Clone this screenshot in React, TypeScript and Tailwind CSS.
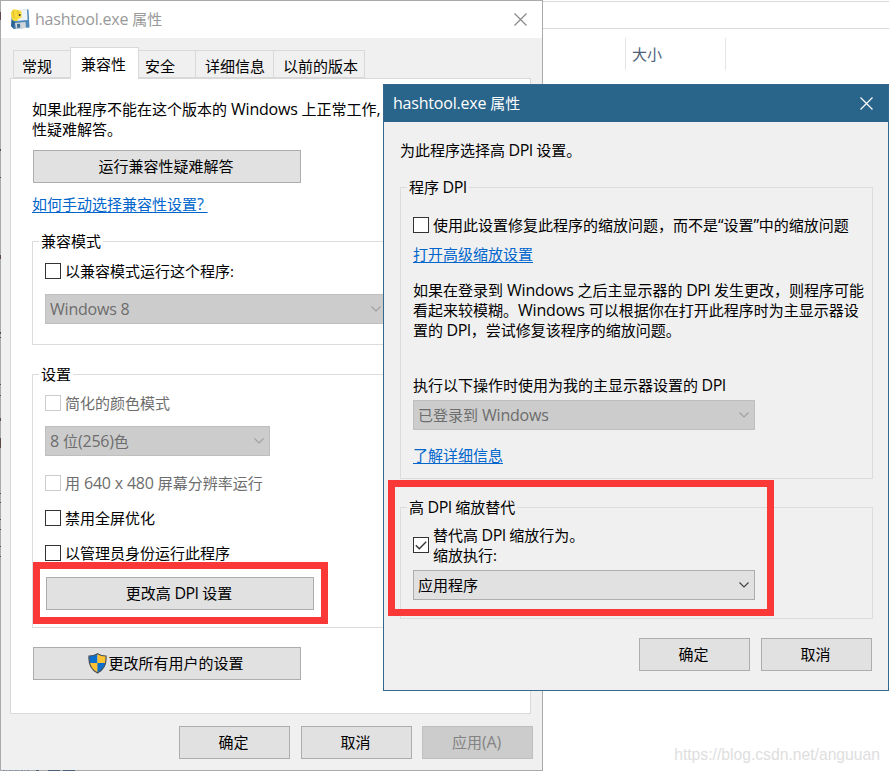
import type { ReactNode } from "react";
import clsx from "clsx";

/** Latin runs are set a touch larger than the CJK text around them. */
function En({ children }: { children: ReactNode }) {
  return <span className="text-base leading-none tracking-[-0.2px] whitespace-pre-wrap">{children}</span>;
}

function Dpi({ before = " ", after = " " }: { before?: string; after?: string }) {
  return (
    <span className="text-base leading-none tracking-[-0.55px] whitespace-pre-wrap">{`${before}DPI${after}`}</span>
  );
}

function Button({ children, className, disabled }: { children: ReactNode; className?: string; disabled?: boolean }) {
  return (
    <button
      className={clsx(
        "flex h-[33px] shrink-0 items-center justify-center border pr-0.5 pb-0.5 leading-5",
        disabled ? "border-[#bfbfbf] bg-[#cccccc] text-[#838383]" : "border-[#adadad] bg-[#e1e1e1]",
        className
      )}
    >
      {children}
    </button>
  );
}

function Select({ children, className, disabled }: { children: ReactNode; className?: string; disabled?: boolean }) {
  return (
    <div
      className={clsx(
        "flex h-[30px] items-center justify-between border pr-[5px] pl-1",
        disabled ? "border-[#bfbfbf] bg-[#cccccc] text-[#6d6d6d]" : "border-[#adadad] bg-[#e1e1e1]",
        className
      )}
    >
      <span>{children}</span>
      <svg width="10" height="6" viewBox="0 0 10 6" fill="none" aria-hidden="true">
        <path d="M0.5 0.5L5 5L9.5 0.5" stroke={disabled ? "#a0a0a0" : "#404040"} strokeWidth="1.1" />
      </svg>
    </div>
  );
}

function Checkbox({ children, className, checked, disabled }: {
  children: ReactNode;
  className?: string;
  checked?: boolean;
  disabled?: boolean;
}) {
  return (
    <label className={clsx("flex items-center gap-1 whitespace-nowrap", disabled && "text-[#6d6d6d]", className)}>
      <span
        className={clsx(
          "flex h-4 w-4 shrink-0 items-center justify-center border bg-white",
          disabled ? "border-[#cccccc]" : "border-[#333333]"
        )}
      >
        {checked && (
          <svg width="12" height="9" viewBox="0 0 12 9" fill="none" aria-hidden="true">
            <path d="M0.8 4.2L4.3 7.7L11.2 0.8" stroke="#333" strokeWidth="1.4" />
          </svg>
        )}
      </span>
      <span>{children}</span>
    </label>
  );
}

function Group({ title, className, children }: { title: ReactNode; className?: string; children: ReactNode }) {
  return (
    <fieldset className={clsx("border border-[#dcdcdc]", className)}>
      <legend className="ml-1.5 h-5 px-0.5 whitespace-nowrap">{title}</legend>
      <div className="flow-root pl-3">{children}</div>
    </fieldset>
  );
}

function Link({ children, className }: { children: ReactNode; className?: string }) {
  return (
    <a className={clsx("block w-fit text-[#0066cc] underline decoration-1 underline-offset-2", className)}>{children}</a>
  );
}

function CloseIcon({ color }: { color: string }) {
  return (
    <svg width="13" height="13" viewBox="0 0 13 13" fill="none" aria-hidden="true">
      <path d="M0.5 0.5L12.5 12.5M12.5 0.5L0.5 12.5" stroke={color} strokeWidth="1.2" />
    </svg>
  );
}

/** Floppy disk with the yellow python in front of it */
function AppIcon() {
  return (
    <svg width="20" height="21" viewBox="0 0 20 21" aria-hidden="true">
      <path d="M2 1.5L18.5 0.5L19.5 18.5L4 20L1 17Z" fill="#4e88b8" />
      <path d="M2 9L1 17L4 20L5 13Z" fill="#2f6595" />
      <path d="M8 1L17 0.6L17.6 11L6 12Z" fill="#eef3f6" />
      <path d="M5 14L15.5 13L16 19L6 19.8Z" fill="#cfd6da" />
      <path d="M7 15L10 14.8L10.3 18.6L7.2 18.9Z" fill="#3c6c96" />
      <path d="M3 0.5Q6 -0.5 8 1.5Q11 0.5 11.5 3.5V8.5Q10 10 8 9.5V11.5Q4 13 2 10.5L0.8 4Z" fill="#f8dc3c" />
      <path d="M3 2L4 9M8 2V5" stroke="#e0b520" fill="none" />
      <circle cx="9.7" cy="6" r="1" fill="#333" />
    </svg>
  );
}

function ShieldIcon() {
  return (
    <svg width="19" height="21" viewBox="0 0 19 21" className="mt-0.5" aria-hidden="true">
      <path d="M9.5 0.7Q6 3 1 3Q0 15 9.5 20Z" fill="#0b6fce" />
      <path d="M9.5 0.7Q13 3 18 3Q19 15 9.5 20Z" fill="#ffc233" />
      <path d="M0.9 10H9.5V20Q3 17 0.9 10Z" fill="#ffc233" />
      <path d="M18.1 10H9.5V20Q16 17 18.1 10Z" fill="#0b6fce" />
      <path d="M9.5 0.7Q13 3 18 3Q19 15 9.5 20Q0 15 1 3Q6 3 9.5 0.7Z" fill="none" stroke="#4b5258" strokeWidth="1.2" />
    </svg>
  );
}

/** Column header of the file list behind the windows */
function Explorer() {
  return (
    <div className="ml-[543px]">
      <div className="mt-px h-7 border-y border-[#d9d9d9]" />
      <div className="mt-[9px] ml-[82px] flex h-8 w-[101px] items-center border-x border-[#e5e5e5] pl-1.5 text-[#4c607a]">
        大小
      </div>
    </div>
  );
}

/** Bits of the file list that show through the window's thin edge */
function EdgeMarks() {
  return (
    <svg className="absolute -top-px -left-px" width="80" height="771" fill="none" aria-hidden="true">
      <path
        d="M.5 12V20M.5 149V151M.5 177V178M.5 255V259M.5 332V334M.5 337V338M.5 384V385M.5 395V396M.5 418V421M.5 438V448M.5 493V494M.5 502V503M.5 519V520M.5 529V530M.5 546V547M.5 556V557"
        stroke="#5b4a48"
      />
      <path d="M3 770.5H30" stroke="#7d8fa6" strokeDasharray="2 1 1 2" />
      <path d="M36 770.5H39M48 770.5H60M63 770.5H75" stroke="#4c5f78" />
    </svg>
  );
}

function PropertiesWindow() {
  return (
    <section className="absolute top-0 left-0 flex h-[771px] w-[543px] flex-col border border-[#aaaaaa] bg-[#f0f0f0]">
      <header className="flex h-[37px] shrink-0 items-center bg-white pr-[15px] pl-[9px] text-[#999999]">
        <AppIcon />
        <span className="ml-[5px] flex-1 pb-0.5">
          <En>{"hashtool.exe "}</En>属性
        </span>
        <CloseIcon color="#888" />
      </header>

      {/* Tabs */}
      <nav className="relative z-10 mt-[9px] -mb-px ml-3 flex h-8 shrink-0 items-end leading-5">
        <div className="mb-px flex h-7 w-[57px] items-center border border-r-0 border-[#d9d9d9] pt-1 pl-2">常规</div>
        <div className="flex h-8 w-[69px] items-center border border-b-0 border-[#d9d9d9] bg-white pl-2.5">兼容性</div>
        <div className="mb-px flex h-7 w-[57px] items-center border border-l-0 border-[#d9d9d9] pt-1 pl-[6px]">安全</div>
        <div className="mb-px flex h-7 w-[78px] items-center border border-l-0 border-[#d9d9d9] pt-1 pl-[9px]">详细信息</div>
        <div className="mb-px flex h-7 w-[91px] items-center border border-l-0 border-[#d9d9d9] pt-1 pl-[9px]">以前的版本</div>
      </nav>

      <main className="ml-[9px] h-[636px] w-[521px] shrink-0 border border-[#d9d9d9] bg-white pt-5 pl-[21px]">
        <p className="whitespace-nowrap">
          如果此程序不能在这个版本的<En>{" Windows "}</En>上正常工作<En>,</En>
          <br />
          性疑难解答。
        </p>
        <Button className="mt-[11px] ml-[1px] w-[268px]">运行兼容性疑难解答</Button>
        <Link className="mt-[11px]">
          如何手动选择兼容性设置<En>{"?\u00a0"}</En>
        </Link>

        <Group title="兼容模式" className="mt-[17px] h-[114px] w-[478px]">
          <Checkbox className="mt-[10px]">以兼容模式运行这个程序:</Checkbox>
          <Select disabled className="mt-[13px] w-[342px]">
            <En>Windows 8</En>
          </Select>
        </Group>

        <Group title="设置" className="mt-[19px] h-[264px] w-[478px]">
          <Checkbox disabled className="mt-[9px]">简化的颜色模式</Checkbox>
          <Select disabled className="mt-[13px] w-[225px]">
            <En>{"8 "}</En>位<En>(256)</En>色
          </Select>
          <Checkbox disabled className="mt-[17px]">
            用<En>{" 640 x 480 "}</En>屏幕分辨率运行
          </Checkbox>
          <Checkbox className="mt-[15px]">禁用全屏优化</Checkbox>
          <Checkbox className="mt-[15px]">以管理员身份运行此程序</Checkbox>
          <div className="relative mt-[-1px] -ml-3 w-[295px] border-7 border-[#fb3838] bg-white p-[8px_6px_7px]">
            <Button className="w-[268px]">
              <span>
                更改高<Dpi />设置
              </span>
            </Button>
          </div>
        </Group>

        <Button className="mt-[19px] ml-[1px] w-[268px]">
          <ShieldIcon />
          <span className="ml-[1px]">更改所有用户的设置</span>
        </Button>
      </main>

      <footer className="mt-3 flex pl-[178px]">
        <Button className="w-[111px]">确定</Button>
        <Button className="ml-[11px] w-[111px]">取消</Button>
        <Button disabled className="ml-[10px] w-[111px]">
          <span>
            应用<En>(A)</En>
          </span>
        </Button>
      </footer>
      <EdgeMarks />
    </section>
  );
}

function DpiDialog() {
  return (
    <section className="absolute top-[84px] left-[383px] h-[607px] w-[506px] border border-[#35688c] bg-[#f0f0f0]">
      <header className="flex h-[37px] items-center justify-between bg-[#29648a] pr-[15px] pl-[9px] text-white">
        <span className="pb-0.5">
          <En>{"hashtool.exe "}</En>属性
        </span>
        <CloseIcon color="#fff" />
      </header>

      <main className="pl-4">
        <p className="mt-[18px]">
          为此程序选择高<Dpi />设置。
        </p>

        <Group title={<>程序<Dpi after="" /></>} className="mt-[17px] h-[302px] w-[473px]">
          <Checkbox className="mt-[18px]">
            使用此设置修复此程序的缩放问题，而不是<En>“</En>设置<En>”</En>中的缩放问题
          </Checkbox>
          <Link className="mt-[9px]">打开高级缩放设置</Link>
          <p className="mt-[16px] whitespace-nowrap">
            如果在登录到<En>{" Windows "}</En>之后主显示器的<Dpi />发生更改，则程序可能
            <br />
            看起来较模糊。<En>{"Windows "}</En>可以根据你在打开此程序时为主显示器设
            <br />
            置的<Dpi after="" />，尝试修复该程序的缩放问题。
          </p>
          <p className="mt-[35px]">
            执行以下操作时使用为我的主显示器设置的<Dpi after="" />
          </p>
          <Select disabled className="mt-[5px] w-[342px]">
            已登录到<En>{" Windows"}</En>
          </Select>
          <Link className="mt-[15px]">了解详细信息</Link>
        </Group>

        <Group title={<>高<Dpi />缩放替代</>} className="mt-[18px] h-[122px] w-[473px]">
          <Checkbox checked className="mt-[8px]">
            替代高<Dpi />缩放行为。
            <br />
            缩放执行:
          </Checkbox>
          <Select className="mt-[5px] w-[342px]">应用程序</Select>
        </Group>
      </main>

      <footer className="mt-[19px] flex gap-[11px] pl-[255px]">
        <Button className="w-[111px]">确定</Button>
        <Button className="w-[111px]">取消</Button>
      </footer>

      {/* Highlight around the scaling override */}
      <div className="pointer-events-none absolute top-[395px] left-1 h-[136px] w-[386px] border-7 border-[#fb3838]" />
    </section>
  );
}

export default function App() {
  return (
    <div className="relative flow-root h-[771px] w-[889px] overflow-hidden bg-white font-['Open_Sans','Noto_Sans_CJK_SC',sans-serif] text-[15px] leading-5 text-black">
      <Explorer />
      <PropertiesWindow />
      <DpiDialog />
      <div className="absolute right-[9px] bottom-[6px] font-['Liberation_Sans',sans-serif] text-[15.7px] text-[#dedede]">
        https://blog.csdn.net/anguuan
      </div>
    </div>
  );
}
